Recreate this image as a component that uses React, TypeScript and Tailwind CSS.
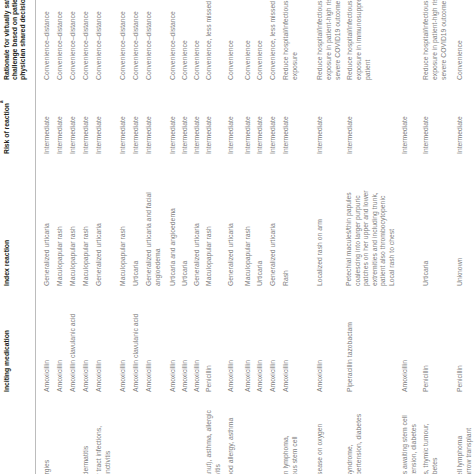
type Row = {
  h: string;
  pre: string[];
  med: string;
  reaction: string[];
  why: string[];
  tight?: boolean;
};

const grid = "grid grid-cols-[134px_106px_132px_74px_160px] -ml-[52px]";

const rows: Row[] = [
  { h: "h-[13px]", pre: ["Multiple drug allergies"], med: "Amoxicillin", reaction: ["Generalized urticaria"], why: ["Convenience–distance"] },
  { h: "h-[13px]", pre: [], med: "Amoxicillin", reaction: ["Maculopapular rash"], why: ["Convenience–distance"] },
  { h: "h-[13px]", pre: [], med: "Amoxicillin clavulanic acid", reaction: ["Maculopapular rash"], why: ["Convenience–distance"] },
  { h: "h-[13px]", pre: ["Asthma, contact dermatitis"], med: "Amoxicillin", reaction: ["Maculopapular rash"], why: ["Convenience–distance"] },
  {
    h: "h-[24px]",
    pre: ["Upper respiratory tract infections,", "and allergic conjunctivitis"],
    med: "Amoxicillin",
    reaction: ["Generalized urticaria"],
    why: ["Convenience–distance"],
  },
  { h: "h-[13px]", pre: [], med: "Amoxicillin", reaction: ["Maculopapular rash"], why: ["Convenience–distance"] },
  { h: "h-[13px]", pre: [], med: "Amoxicillin clavulanic acid", reaction: ["Urticaria"], why: ["Convenience–distance"] },
  {
    h: "h-[24px]",
    pre: [],
    med: "Amoxicillin",
    reaction: ["Generalized urticaria and facial", "angioedema"],
    why: ["Convenience–distance"],
  },
  { h: "h-[12px]", pre: [], med: "Amoxicillin", reaction: ["Urticaria and angioedema"], why: ["Convenience–distance"] },
  { h: "h-[12px]", pre: [], med: "Amoxicillin", reaction: ["Urticaria"], why: ["Convenience"] },
  { h: "h-[12px]", pre: [], med: "Amoxicillin", reaction: ["Generalized urticaria"], why: ["Convenience"] },
  {
    h: "h-[22px]",
    pre: ["Food allergy (peanut), asthma, allergic", "rhinitis, conjunctivitis"],
    med: "Penicillin",
    reaction: ["Maculopapular rash"],
    why: ["Convenience, less missed school"],
  },
  {
    h: "h-[17px]",
    pre: ["Allergic rhinitis, food allergy, asthma"],
    med: "Amoxicillin",
    reaction: ["Generalized urticaria"],
    why: ["Convenience"],
  },
  { h: "h-[12px]", pre: [], med: "Amoxicillin", reaction: ["Maculopapular rash"], why: ["Convenience"] },
  { h: "h-[13px]", pre: [], med: "Amoxicillin", reaction: ["Urticaria"], why: ["Convenience"] },
  { h: "h-[13px]", pre: [], med: "Amoxicillin", reaction: ["Generalized urticaria"], why: ["Convenience, less missed work"] },
  {
    h: "h-[34px]",
    pre: ["Relapsed Hodgkin lymphoma,", "previous autologous stem cell", "transplant"],
    med: "Amoxicillin",
    reaction: ["Rash"],
    why: ["Reduce hospital/infectious", "exposure"],
  },
  {
    h: "h-[30px]",
    pre: ["Interstitial lung disease on oxygen"],
    med: "Amoxicillin",
    reaction: ["Localized rash on arm"],
    why: ["Reduce hospital/infectious", "exposure in patient-high risk of", "severe COVID19 outcome"],
  },
  {
    h: "h-[55px]",
    tight: true,
    pre: ["Myelodysplastic syndrome,", "kidney failure, hypertension, diabetes"],
    med: "Piperacillin tazobactam",
    reaction: [
      "Petechial maculeś/thin papules",
      "coalescing into larger purpuric",
      "patches on her upper and lower",
      "extremities and including trunk,",
      "patient also thrombocytopenic",
      "Local rash to chest",
    ],
    why: ["Reduce hospital/infectious", "exposure in immunosuppressed", "patient"],
  },
  {
    h: "h-[21px]",
    pre: ["Renal amyloidosis awaiting stem cell", "transplant, hypertension, diabetes"],
    med: "Amoxicillin",
    reaction: [],
    why: [],
  },
  {
    h: "h-[34px]",
    pre: ["Myasthenia gravis, thymic tumour,", "hypertension, diabetes"],
    med: "Penicillin",
    reaction: ["Urticaria"],
    why: ["Reduce hospital/infectious", "exposure in patient-high risk of", "severe COVID19 outcome"],
  },
  {
    h: "h-[13px]",
    pre: ["Diffuse large B-cell lymphoma", "awaiting bone marrow transplant"],
    med: "Penicillin",
    reaction: ["Unknown"],
    why: ["Convenience"],
  },
];

function Lines({ items, tight }: { items: string[]; tight?: boolean }) {
  return (
    <div className={tight ? "flex flex-col leading-[8.5px]" : "flex flex-col leading-[9px]"}>
      {items.map((t, i) => (
        <span key={i} className="whitespace-nowrap">
          {t}
        </span>
      ))}
    </div>
  );
}

export default function App() {
  return (
    <div className="w-[474px] h-[474px] overflow-hidden bg-white">
      {/* the table is printed sideways in the source page */}
      <div className="w-[474px] h-[474px] overflow-hidden bg-white [transform:rotate(-90deg)] font-['Liberation_Sans',Arial,sans-serif] text-[6.8px]">
        <div className={`${grid} pt-[3px] pb-[8px] border-b border-[#bcbcbc] font-bold text-[#231f20] leading-[8px]`}>
          <div className="whitespace-nowrap">Comorbidities</div>
          <div className="whitespace-nowrap">Inciting medication</div>
          <div className="whitespace-nowrap">Index reaction</div>
          <div className="whitespace-nowrap">
            Risk of reaction<sup className="text-[4.5px] align-super">a</sup>
          </div>
          <div className="flex flex-col">
            <span className="whitespace-nowrap">Rationale for virtually safe drug</span>
            <span className="whitespace-nowrap">challenge based on patient-</span>
            <span className="whitespace-nowrap">physician shared decision</span>
          </div>
        </div>

        <div className="pt-[4px] text-[#808080]">
          {rows.map((r, i) => (
            <div key={i} className={`${grid} ${r.h} pt-[2px]`}>
              <Lines items={r.pre} />
              <Lines items={[r.med]} />
              <Lines items={r.reaction} tight={r.tight} />
              <Lines items={["Intermediate"]} />
              <Lines items={r.why} />
            </div>
          ))}
        </div>
      </div>
    </div>
  );
}
